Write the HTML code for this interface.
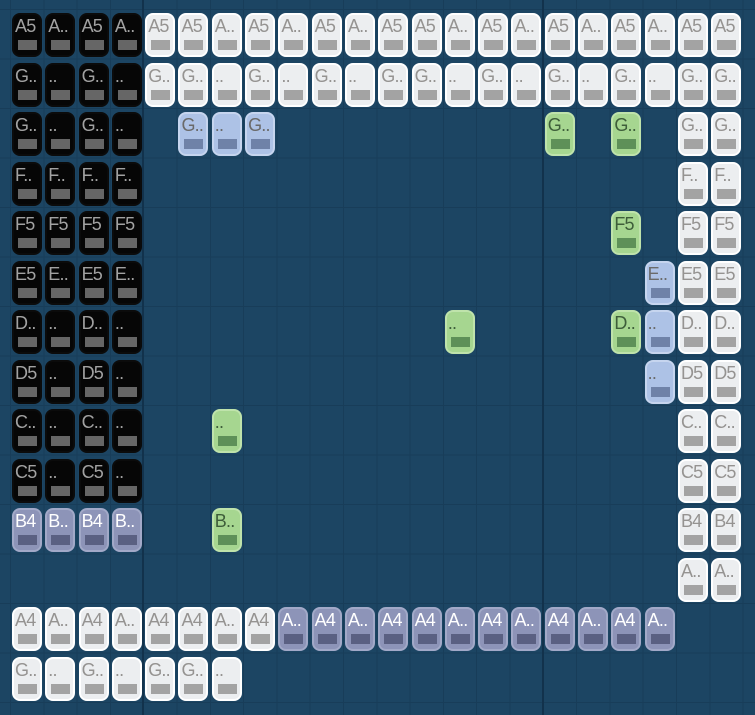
<!DOCTYPE html>
<html><head><meta charset="utf-8"><style>
html,body{margin:0;padding:0}
body{width:755px;height:715px;overflow:hidden;position:relative;background:#1c4563;font-family:"Liberation Sans",sans-serif}
.bg{position:absolute;left:0;top:0;width:755px;height:715px;
background-image:
linear-gradient(90deg,transparent 142px,#12324c 142px,#12324c 144px,transparent 144px,transparent 542px,#12324c 542px,#12324c 544px,transparent 544px),
repeating-linear-gradient(90deg,#183d59 0,#183d59 1px,transparent 1px,transparent 33.3px),
repeating-linear-gradient(180deg,#183d59 0,#183d59 1px,transparent 1px,transparent 49.5px);
background-position:0 0,10px 0,0 9px}
.g{position:absolute;left:10px;top:9px;display:grid;grid-template-columns:repeat(22,33.3px);grid-template-rows:repeat(14,49.5px)}
.g i{position:relative;font-style:normal;display:block;margin:4px 0 0 2px;width:30px;height:44px;box-sizing:border-box;border:2px solid;border-radius:8px;font-size:18px;line-height:22px;padding-left:1px;letter-spacing:-0.8px;white-space:nowrap;overflow:hidden}
.g i b{position:absolute;left:4px;bottom:5px;width:19px;height:10px}
.k{background:#060606;border-color:#0b0b0b!important;color:#a2a2a2}.k b{background:#666}
.w{background:#eceef0;border-color:#fff!important;color:#959391}.w b{background:#a3a3a3}
.b{background:#adc2e6;border-color:#c6d5ef!important;color:#6a6a6a}.b b{background:#6f82a8}
.n{background:#a6d690;border-color:#bfe3ab!important;color:#3e5e3a}.n b{background:#5e9058}
.l{background:#8d94b8;border-color:#a2a9c8!important;color:#fff}.l b{background:#5a6082}
</style></head><body><div class="bg"></div>
<div class="g">
<i class="k" style="grid-area:1/1">A5<b></b></i><i class="k" style="grid-area:1/2">A..<b></b></i><i class="k" style="grid-area:1/3">A5<b></b></i><i class="k" style="grid-area:1/4">A..<b></b></i>
<i class="w" style="grid-area:1/5">A5<b></b></i><i class="w" style="grid-area:1/6">A5<b></b></i><i class="w" style="grid-area:1/7">A..<b></b></i><i class="w" style="grid-area:1/8">A5<b></b></i><i class="w" style="grid-area:1/9">A..<b></b></i><i class="w" style="grid-area:1/10">A5<b></b></i><i class="w" style="grid-area:1/11">A..<b></b></i><i class="w" style="grid-area:1/12">A5<b></b></i><i class="w" style="grid-area:1/13">A5<b></b></i><i class="w" style="grid-area:1/14">A..<b></b></i><i class="w" style="grid-area:1/15">A5<b></b></i><i class="w" style="grid-area:1/16">A..<b></b></i><i class="w" style="grid-area:1/17">A5<b></b></i><i class="w" style="grid-area:1/18">A..<b></b></i><i class="w" style="grid-area:1/19">A5<b></b></i><i class="w" style="grid-area:1/20">A..<b></b></i><i class="w" style="grid-area:1/21">A5<b></b></i><i class="w" style="grid-area:1/22">A5<b></b></i>
<i class="k" style="grid-area:2/1">G..<b></b></i><i class="k" style="grid-area:2/2">..<b></b></i><i class="k" style="grid-area:2/3">G..<b></b></i><i class="k" style="grid-area:2/4">..<b></b></i>
<i class="w" style="grid-area:2/5">G..<b></b></i><i class="w" style="grid-area:2/6">G..<b></b></i><i class="w" style="grid-area:2/7">..<b></b></i><i class="w" style="grid-area:2/8">G..<b></b></i><i class="w" style="grid-area:2/9">..<b></b></i><i class="w" style="grid-area:2/10">G..<b></b></i><i class="w" style="grid-area:2/11">..<b></b></i><i class="w" style="grid-area:2/12">G..<b></b></i><i class="w" style="grid-area:2/13">G..<b></b></i><i class="w" style="grid-area:2/14">..<b></b></i><i class="w" style="grid-area:2/15">G..<b></b></i><i class="w" style="grid-area:2/16">..<b></b></i><i class="w" style="grid-area:2/17">G..<b></b></i><i class="w" style="grid-area:2/18">..<b></b></i><i class="w" style="grid-area:2/19">G..<b></b></i><i class="w" style="grid-area:2/20">..<b></b></i><i class="w" style="grid-area:2/21">G..<b></b></i><i class="w" style="grid-area:2/22">G..<b></b></i>
<i class="k" style="grid-area:3/1">G..<b></b></i><i class="k" style="grid-area:3/2">..<b></b></i><i class="k" style="grid-area:3/3">G..<b></b></i><i class="k" style="grid-area:3/4">..<b></b></i>
<i class="b" style="grid-area:3/6">G..<b></b></i><i class="b" style="grid-area:3/7">..<b></b></i><i class="b" style="grid-area:3/8">G..<b></b></i>
<i class="n" style="grid-area:3/17">G..<b></b></i><i class="n" style="grid-area:3/19">G..<b></b></i>
<i class="w" style="grid-area:3/21">G..<b></b></i><i class="w" style="grid-area:3/22">G..<b></b></i>
<i class="k" style="grid-area:4/1">F..<b></b></i><i class="k" style="grid-area:4/2">F..<b></b></i><i class="k" style="grid-area:4/3">F..<b></b></i><i class="k" style="grid-area:4/4">F..<b></b></i>
<i class="w" style="grid-area:4/21">F..<b></b></i><i class="w" style="grid-area:4/22">F..<b></b></i>
<i class="k" style="grid-area:5/1">F5<b></b></i><i class="k" style="grid-area:5/2">F5<b></b></i><i class="k" style="grid-area:5/3">F5<b></b></i><i class="k" style="grid-area:5/4">F5<b></b></i>
<i class="n" style="grid-area:5/19">F5<b></b></i>
<i class="w" style="grid-area:5/21">F5<b></b></i><i class="w" style="grid-area:5/22">F5<b></b></i>
<i class="k" style="grid-area:6/1">E5<b></b></i><i class="k" style="grid-area:6/2">E..<b></b></i><i class="k" style="grid-area:6/3">E5<b></b></i><i class="k" style="grid-area:6/4">E..<b></b></i>
<i class="b" style="grid-area:6/20">E..<b></b></i>
<i class="w" style="grid-area:6/21">E5<b></b></i><i class="w" style="grid-area:6/22">E5<b></b></i>
<i class="k" style="grid-area:7/1">D..<b></b></i><i class="k" style="grid-area:7/2">..<b></b></i><i class="k" style="grid-area:7/3">D..<b></b></i><i class="k" style="grid-area:7/4">..<b></b></i>
<i class="n" style="grid-area:7/14">..<b></b></i><i class="n" style="grid-area:7/19">D..<b></b></i><i class="b" style="grid-area:7/20">..<b></b></i>
<i class="w" style="grid-area:7/21">D..<b></b></i><i class="w" style="grid-area:7/22">D..<b></b></i>
<i class="k" style="grid-area:8/1">D5<b></b></i><i class="k" style="grid-area:8/2">..<b></b></i><i class="k" style="grid-area:8/3">D5<b></b></i><i class="k" style="grid-area:8/4">..<b></b></i>
<i class="b" style="grid-area:8/20">..<b></b></i>
<i class="w" style="grid-area:8/21">D5<b></b></i><i class="w" style="grid-area:8/22">D5<b></b></i>
<i class="k" style="grid-area:9/1">C..<b></b></i><i class="k" style="grid-area:9/2">..<b></b></i><i class="k" style="grid-area:9/3">C..<b></b></i><i class="k" style="grid-area:9/4">..<b></b></i>
<i class="n" style="grid-area:9/7">..<b></b></i>
<i class="w" style="grid-area:9/21">C..<b></b></i><i class="w" style="grid-area:9/22">C..<b></b></i>
<i class="k" style="grid-area:10/1">C5<b></b></i><i class="k" style="grid-area:10/2">..<b></b></i><i class="k" style="grid-area:10/3">C5<b></b></i><i class="k" style="grid-area:10/4">..<b></b></i>
<i class="w" style="grid-area:10/21">C5<b></b></i><i class="w" style="grid-area:10/22">C5<b></b></i>
<i class="l" style="grid-area:11/1">B4<b></b></i><i class="l" style="grid-area:11/2">B..<b></b></i><i class="l" style="grid-area:11/3">B4<b></b></i><i class="l" style="grid-area:11/4">B..<b></b></i>
<i class="n" style="grid-area:11/7">B..<b></b></i>
<i class="w" style="grid-area:11/21">B4<b></b></i><i class="w" style="grid-area:11/22">B4<b></b></i>
<i class="w" style="grid-area:12/21">A..<b></b></i><i class="w" style="grid-area:12/22">A..<b></b></i>
<i class="w" style="grid-area:13/1">A4<b></b></i><i class="w" style="grid-area:13/2">A..<b></b></i><i class="w" style="grid-area:13/3">A4<b></b></i><i class="w" style="grid-area:13/4">A..<b></b></i><i class="w" style="grid-area:13/5">A4<b></b></i><i class="w" style="grid-area:13/6">A4<b></b></i><i class="w" style="grid-area:13/7">A..<b></b></i><i class="w" style="grid-area:13/8">A4<b></b></i>
<i class="l" style="grid-area:13/9">A..<b></b></i><i class="l" style="grid-area:13/10">A4<b></b></i><i class="l" style="grid-area:13/11">A..<b></b></i><i class="l" style="grid-area:13/12">A4<b></b></i><i class="l" style="grid-area:13/13">A4<b></b></i><i class="l" style="grid-area:13/14">A..<b></b></i><i class="l" style="grid-area:13/15">A4<b></b></i><i class="l" style="grid-area:13/16">A..<b></b></i><i class="l" style="grid-area:13/17">A4<b></b></i><i class="l" style="grid-area:13/18">A..<b></b></i><i class="l" style="grid-area:13/19">A4<b></b></i><i class="l" style="grid-area:13/20">A..<b></b></i>
<i class="w" style="grid-area:14/1">G..<b></b></i><i class="w" style="grid-area:14/2">..<b></b></i><i class="w" style="grid-area:14/3">G..<b></b></i><i class="w" style="grid-area:14/4">..<b></b></i><i class="w" style="grid-area:14/5">G..<b></b></i><i class="w" style="grid-area:14/6">G..<b></b></i><i class="w" style="grid-area:14/7">..<b></b></i>
</div>
</body></html>
